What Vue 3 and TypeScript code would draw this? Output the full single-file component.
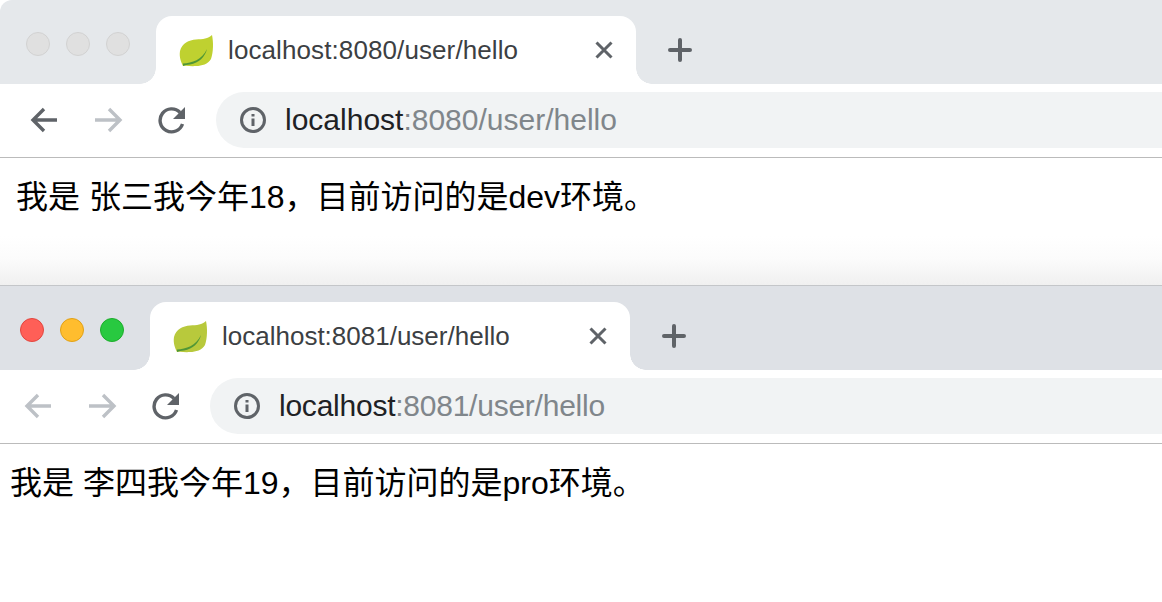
<script setup lang="ts">
interface Win { dots: string[]; port: string; text: string; first: boolean }
const wins: Win[] = [
  { dots: ['gray', 'gray', 'gray'], port: '8080', text: '我是 张三我今年18\uFF0C目前访问的是dev环境。', first: true },
  { dots: ['red', 'yellow', 'green'], port: '8081', text: '我是 李四我今年19\uFF0C目前访问的是pro环境。', first: false },
]
</script>

<template>
  <div class="page">
    <section v-for="w in wins" :key="w.port" class="win" :class="w.first ? 'one' : 'two'">
      <div class="strip">
        <div class="dots">
          <span v-for="(d, i) in w.dots" :key="i" class="dot" :class="d"></span>
        </div>
        <div class="tab">
          <svg class="leaf" width="36" height="36" viewBox="0 0 36 36">
            <path d="M5 34C3 30 1 25 2 19 4 11 11 8 18 7.500 25 7 30 7 34 3 35.500 10 35.500 20 33 27 30 32 24 34 18 34 13 34.500 9 33.500 5 34Z" :fill="w.first ? '#bfd130' : '#b8c93c'"/>
            <path d="M5 31.500C14 31 24 28 29 17 27 25 21 31 12 32.500 9 33 7 33 5 34Z" fill="#4f9636"/>
          </svg>
          <span class="title">localhost:{{ w.port }}/user/hello</span>
          <svg class="close" width="18" height="18" viewBox="0 0 18 18"><path d="M1.500 1.500 16.500 16.500M16.500 1.500 1.500 16.500" stroke="#5f6368" stroke-width="3" fill="none"/></svg>
        </div>
        <svg class="plus" width="26" height="26" viewBox="0 0 26 26"><path d="M13 3V23M3 13H23" stroke="#5f6368" stroke-width="4" stroke-linecap="round" fill="none"/></svg>
      </div>
      <div class="bar">
        <svg class="nav" width="30" height="28" viewBox="0 0 30 28"><path d="M29 14H6M16 3 5 14 16 25" fill="none" :stroke="w.first ? '#5f6368' : '#bdc1c6'" stroke-width="3.400"/></svg>
        <svg class="nav" width="30" height="28" viewBox="0 0 30 28"><path d="M2 14H26M16 3 27 14 16 25" fill="none" stroke="#bdc1c6" stroke-width="3.400"/></svg>
        <svg class="nav" width="30" height="28" viewBox="0 0 30 28"><path d="M24.500 18A11.500 11.500 0 1 1 22 6.500" fill="none" stroke="#5f6368" stroke-width="3.400"/><path d="M27 1V13H15Z" fill="#5f6368"/></svg>
        <div class="omni">
          <svg width="28" height="28" viewBox="0 0 28 28"><circle cx="14" cy="14" r="11.500" fill="none" stroke="#5f6368" stroke-width="3"/><path d="M14 12.500V20M14 8V10.500" stroke="#5f6368" stroke-width="3" fill="none"/></svg>
          <span class="url"><b>localhost</b>:{{ w.port }}/user/hello</span>
        </div>
      </div>
      <div class="content">{{ w.text }}</div>
    </section>
  </div>
</template>

<style>
html, body { margin: 0; background: #fff; }
</style>

<style scoped>
.page { width: 1162px; height: 602px; overflow: hidden; font-family: "Liberation Sans", "Noto Sans CJK SC", sans-serif; }
.win { width: 1162px; }
.one { --strip: #e5e8eb; height: 285px; background: linear-gradient(#fff 0, #fff 236px, #fbfbfb 260px, #f0f0f0 285px); }
.two { --strip: #dee1e6; height: 317px; border-top: 1px solid #c4c6c9; box-sizing: border-box; background: #fff; }
.strip { display: flex; align-items: flex-end; height: 84px; background: var(--strip); border-top-left-radius: 12px; }
.two .strip { border-top-left-radius: 0; }
.dots { display: flex; gap: 16px; width: 156px; box-sizing: border-box; padding: 0 0 28px 26px; }
.two .dots { width: 150px; padding-left: 20px; }
.dot { width: 24px; height: 24px; border-radius: 50%; box-sizing: border-box; border: 1px solid; }
.gray { background: #e0e0e0; border-color: #d2d2d2; }
.red { background: #ff5f57; border-color: #e2463f; }
.yellow { background: #ffbd2e; border-color: #e1a116; }
.green { background: #28c940; border-color: #1dad2b; }
.tab { position: relative; width: 480px; height: 68px; background: #fff; border-radius: 16px 16px 0 0; display: flex; align-items: center; padding: 0 23px 0 22px; box-sizing: border-box; }
.tab::before, .tab::after { content: ""; position: absolute; bottom: 0; width: 16px; height: 16px; }
.tab::before { left: -16px; background: radial-gradient(circle at 0 0, var(--strip) 15.5px, #fff 16px); }
.tab::after { right: -16px; background: radial-gradient(circle at 100% 0, var(--strip) 15.5px, #fff 16px); }
.leaf { margin-right: 14px; filter: blur(0.5px); }
.title { flex: 1; font-size: 26px; letter-spacing: 0.1px; color: #3c4043; }
.two .title { letter-spacing: 0; }
.plus { margin: 0 0 21px 31px; }
.bar { height: 74px; box-sizing: border-box; border-bottom: 1px solid #bbbbbb; background: #fff; display: flex; align-items: flex-start; padding: 8px 0 0 28px; }
.nav { margin: 14px 35px 0 0; }
.nav:nth-of-type(3) { margin-right: 28px; }
.two .bar { padding-left: 22px; }
.omni { flex: 1; height: 56px; background: #f1f3f4; border-radius: 28px 0 0 28px; display: flex; align-items: center; gap: 18px; padding-left: 23px; }
.url { font-size: 30px; color: #80868b; }
.two .url { letter-spacing: -0.24px; }
.url b { font-weight: 400; color: #202124; }
.content { padding: 21px 0 0 16px; font-size: 32px; line-height: 36px; color: #000; }
.two .content { padding-left: 10px; }
</style>
